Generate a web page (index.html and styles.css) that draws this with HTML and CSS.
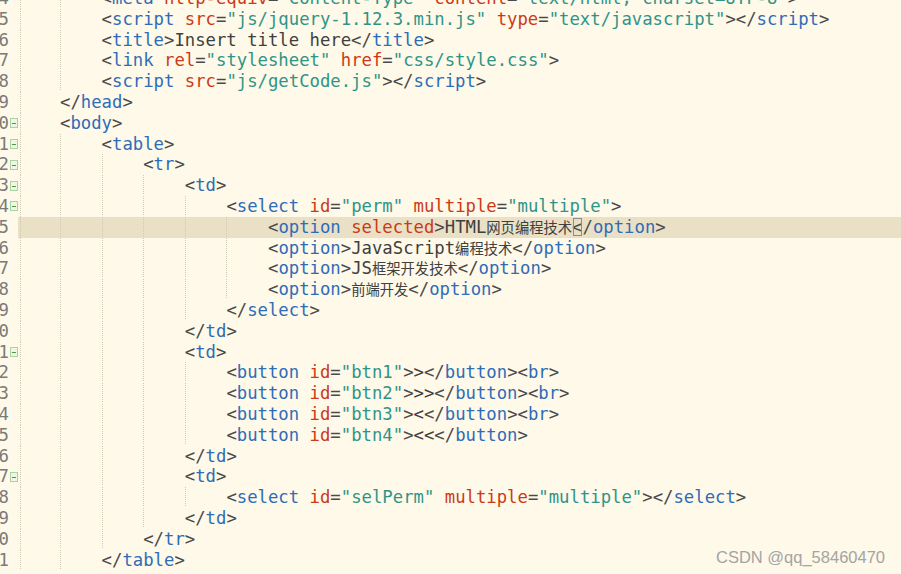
FILE: index.html
```html
<!DOCTYPE html>
<html>
<head>
<meta charset="utf-8">
<title>Editor</title>
<link rel="stylesheet" href="styles.css">
</head>
<body>
<div class="editor">
  <div class="l"><span class="g"><span class="n">4</span></span><span class="code"><span class="i">    </span><span class="p">&lt;</span><span class="t">meta</span> <span class="a">http-equiv</span><span class="p">=</span><span class="v">"Content-Type"</span> <span class="a">content</span><span class="p">=</span><span class="v">"text/html; charset=UTF-8"</span><span class="p">&gt;</span></span></div>
  <div class="l"><span class="g"><span class="n">5</span></span><span class="code"><span class="i">    </span><span class="p">&lt;</span><span class="t">script</span> <span class="a">src</span><span class="p">=</span><span class="v">"js/jquery-1.12.3.min.js"</span> <span class="a">type</span><span class="p">=</span><span class="v">"text/javascript"</span><span class="p">&gt;&lt;/</span><span class="t">script</span><span class="p">&gt;</span></span></div>
  <div class="l"><span class="g"><span class="n">6</span></span><span class="code"><span class="i">    </span><span class="p">&lt;</span><span class="t">title</span><span class="p">&gt;</span><span class="x">Insert title here</span><span class="p">&lt;/</span><span class="t">title</span><span class="p">&gt;</span></span></div>
  <div class="l"><span class="g"><span class="n">7</span></span><span class="code"><span class="i">    </span><span class="p">&lt;</span><span class="t">link</span> <span class="a">rel</span><span class="p">=</span><span class="v">"stylesheet"</span> <span class="a">href</span><span class="p">=</span><span class="v">"css/style.css"</span><span class="p">&gt;</span></span></div>
  <div class="l"><span class="g"><span class="n">8</span></span><span class="code"><span class="i">    </span><span class="p">&lt;</span><span class="t">script</span> <span class="a">src</span><span class="p">=</span><span class="v">"js/getCode.js"</span><span class="p">&gt;&lt;/</span><span class="t">script</span><span class="p">&gt;</span></span></div>
  <div class="l"><span class="g"><span class="n">9</span></span><span class="code"><span class="p">&lt;/</span><span class="t">head</span><span class="p">&gt;</span></span></div>
  <div class="l"><span class="g"><span class="n">10</span><span class="f"></span></span><span class="code"><span class="p">&lt;</span><span class="t">body</span><span class="p">&gt;</span></span></div>
  <div class="l"><span class="g"><span class="n">11</span><span class="f"></span></span><span class="code"><span class="i">    </span><span class="p">&lt;</span><span class="t">table</span><span class="p">&gt;</span></span></div>
  <div class="l"><span class="g"><span class="n">12</span><span class="f"></span></span><span class="code"><span class="i">    </span><span class="i">    </span><span class="p">&lt;</span><span class="t">tr</span><span class="p">&gt;</span></span></div>
  <div class="l"><span class="g"><span class="n">13</span><span class="f"></span></span><span class="code"><span class="i">    </span><span class="i">    </span><span class="i">    </span><span class="p">&lt;</span><span class="t">td</span><span class="p">&gt;</span></span></div>
  <div class="l"><span class="g"><span class="n">14</span><span class="f"></span></span><span class="code"><span class="i">    </span><span class="i">    </span><span class="i">    </span><span class="i">    </span><span class="p">&lt;</span><span class="t">select</span> <span class="a">id</span><span class="p">=</span><span class="v">"perm"</span> <span class="a">multiple</span><span class="p">=</span><span class="v">"multiple"</span><span class="p">&gt;</span></span></div>
  <div class="l hl"><span class="g"><span class="n">15</span></span><span class="code"><span class="i">    </span><span class="i">    </span><span class="i">    </span><span class="i">    </span><span class="i">    </span><span class="p">&lt;</span><span class="t">option</span> <span class="a">selected</span><span class="p">&gt;</span><span class="x">HTML<span class="c">网页编程技术</span></span><span class="p"><span class="cur">&lt;</span>/</span><span class="t">option</span><span class="p">&gt;</span></span></div>
  <div class="l"><span class="g"><span class="n">16</span></span><span class="code"><span class="i">    </span><span class="i">    </span><span class="i">    </span><span class="i">    </span><span class="i">    </span><span class="p">&lt;</span><span class="t">option</span><span class="p">&gt;</span><span class="x">JavaScript<span class="c">编程技术</span></span><span class="p">&lt;/</span><span class="t">option</span><span class="p">&gt;</span></span></div>
  <div class="l"><span class="g"><span class="n">17</span></span><span class="code"><span class="i">    </span><span class="i">    </span><span class="i">    </span><span class="i">    </span><span class="i">    </span><span class="p">&lt;</span><span class="t">option</span><span class="p">&gt;</span><span class="x">JS<span class="c">框架开发技术</span></span><span class="p">&lt;/</span><span class="t">option</span><span class="p">&gt;</span></span></div>
  <div class="l"><span class="g"><span class="n">18</span></span><span class="code"><span class="i">    </span><span class="i">    </span><span class="i">    </span><span class="i">    </span><span class="i">    </span><span class="p">&lt;</span><span class="t">option</span><span class="p">&gt;</span><span class="x"><span class="c">前端开发</span></span><span class="p">&lt;/</span><span class="t">option</span><span class="p">&gt;</span></span></div>
  <div class="l"><span class="g"><span class="n">19</span></span><span class="code"><span class="i">    </span><span class="i">    </span><span class="i">    </span><span class="i">    </span><span class="p">&lt;/</span><span class="t">select</span><span class="p">&gt;</span></span></div>
  <div class="l"><span class="g"><span class="n">20</span></span><span class="code"><span class="i">    </span><span class="i">    </span><span class="i">    </span><span class="p">&lt;/</span><span class="t">td</span><span class="p">&gt;</span></span></div>
  <div class="l"><span class="g"><span class="n">21</span><span class="f"></span></span><span class="code"><span class="i">    </span><span class="i">    </span><span class="i">    </span><span class="p">&lt;</span><span class="t">td</span><span class="p">&gt;</span></span></div>
  <div class="l"><span class="g"><span class="n">22</span></span><span class="code"><span class="i">    </span><span class="i">    </span><span class="i">    </span><span class="i">    </span><span class="p">&lt;</span><span class="t">button</span> <span class="a">id</span><span class="p">=</span><span class="v">"btn1"</span><span class="p">&gt;</span><span class="x">&gt;</span><span class="p">&lt;/</span><span class="t">button</span><span class="p">&gt;&lt;</span><span class="t">br</span><span class="p">&gt;</span></span></div>
  <div class="l"><span class="g"><span class="n">23</span></span><span class="code"><span class="i">    </span><span class="i">    </span><span class="i">    </span><span class="i">    </span><span class="p">&lt;</span><span class="t">button</span> <span class="a">id</span><span class="p">=</span><span class="v">"btn2"</span><span class="p">&gt;</span><span class="x">&gt;&gt;</span><span class="p">&lt;/</span><span class="t">button</span><span class="p">&gt;&lt;</span><span class="t">br</span><span class="p">&gt;</span></span></div>
  <div class="l"><span class="g"><span class="n">24</span></span><span class="code"><span class="i">    </span><span class="i">    </span><span class="i">    </span><span class="i">    </span><span class="p">&lt;</span><span class="t">button</span> <span class="a">id</span><span class="p">=</span><span class="v">"btn3"</span><span class="p">&gt;</span><span class="x">&lt;</span><span class="p">&lt;/</span><span class="t">button</span><span class="p">&gt;&lt;</span><span class="t">br</span><span class="p">&gt;</span></span></div>
  <div class="l"><span class="g"><span class="n">25</span></span><span class="code"><span class="i">    </span><span class="i">    </span><span class="i">    </span><span class="i">    </span><span class="p">&lt;</span><span class="t">button</span> <span class="a">id</span><span class="p">=</span><span class="v">"btn4"</span><span class="p">&gt;</span><span class="x">&lt;&lt;</span><span class="p">&lt;/</span><span class="t">button</span><span class="p">&gt;</span></span></div>
  <div class="l"><span class="g"><span class="n">26</span></span><span class="code"><span class="i">    </span><span class="i">    </span><span class="i">    </span><span class="p">&lt;/</span><span class="t">td</span><span class="p">&gt;</span></span></div>
  <div class="l"><span class="g"><span class="n">27</span><span class="f"></span></span><span class="code"><span class="i">    </span><span class="i">    </span><span class="i">    </span><span class="p">&lt;</span><span class="t">td</span><span class="p">&gt;</span></span></div>
  <div class="l"><span class="g"><span class="n">28</span></span><span class="code"><span class="i">    </span><span class="i">    </span><span class="i">    </span><span class="i">    </span><span class="p">&lt;</span><span class="t">select</span> <span class="a">id</span><span class="p">=</span><span class="v">"selPerm"</span> <span class="a">multiple</span><span class="p">=</span><span class="v">"multiple"</span><span class="p">&gt;&lt;/</span><span class="t">select</span><span class="p">&gt;</span></span></div>
  <div class="l"><span class="g"><span class="n">29</span></span><span class="code"><span class="i">    </span><span class="i">    </span><span class="i">    </span><span class="p">&lt;/</span><span class="t">td</span><span class="p">&gt;</span></span></div>
  <div class="l"><span class="g"><span class="n">30</span></span><span class="code"><span class="i">    </span><span class="i">    </span><span class="p">&lt;/</span><span class="t">tr</span><span class="p">&gt;</span></span></div>
  <div class="l"><span class="g"><span class="n">31</span></span><span class="code"><span class="i">    </span><span class="p">&lt;/</span><span class="t">table</span><span class="p">&gt;</span></span></div>
</div>
<div class="mark">CSDN @qq_58460470</div>
</body>
</html>
```
FILE: styles.css
```css
html, body {
  margin: 0;
  padding: 0;
  background: #fef9e8;
  overflow: hidden;
  height: 100%;
}

.editor {
  margin-top: -12px;
  font-family: "DejaVu Sans Mono", monospace;
  font-size: 17.27px;
  color: #3f3f3f;
}

.l {
  display: flex;
  height: 20.8px;
  line-height: 20.8px;
  white-space: pre;
}

.g {
  width: 18px;
  flex: none;
  display: flex;
  align-items: center;
}

.n {
  width: 9px;
  flex: none;
  display: flex;
  justify-content: flex-end;
  overflow: hidden;
  color: #7a7a7a;
}

.f {
  position: relative;
  width: 6px;
  height: 8px;
  margin-left: 1px;
  border: 1px solid #aad3a1;
  background: #eef7e4;
  box-sizing: content-box;
}

.f::after {
  content: "";
  position: absolute;
  left: 1px;
  top: 4px;
  width: 4px;
  height: 1px;
  background: #4f9a43;
}

.code {
  flex: 1;
  padding-left: 42px;
  background: linear-gradient(to bottom, #d2cbb6 50%, transparent 50%) 2px 0 / 1px 2px repeat-y;
}

.hl .code {
  background: linear-gradient(to bottom, #cfc6ae 50%, transparent 50%) 2px 0 / 1px 2px repeat-y, #e9e0c5;
}

.i {
  background: linear-gradient(to bottom, #cfc8b2 50%, transparent 50%) 0 0 / 1px 2px repeat-y;
}

.p { color: #4a4a4a; }
.t { color: #2f6cb8; }
.a { color: #cc3a17; }
.v { color: #2f9488; }
.x { color: #3f3f3f; }

.c {
  font-family: "Noto Sans CJK SC", sans-serif;
  font-size: 14.3px;
  color: #404040;
}

.cur {
  outline: 1px solid #8c8c8c;
  outline-offset: -2px;
}

.mark {
  position: absolute;
  left: 716px;
  top: 548px;
  font-family: "Liberation Sans", Arial, sans-serif;
  font-size: 16.5px;
  color: #a4a4a4;
  white-space: nowrap;
}
```
